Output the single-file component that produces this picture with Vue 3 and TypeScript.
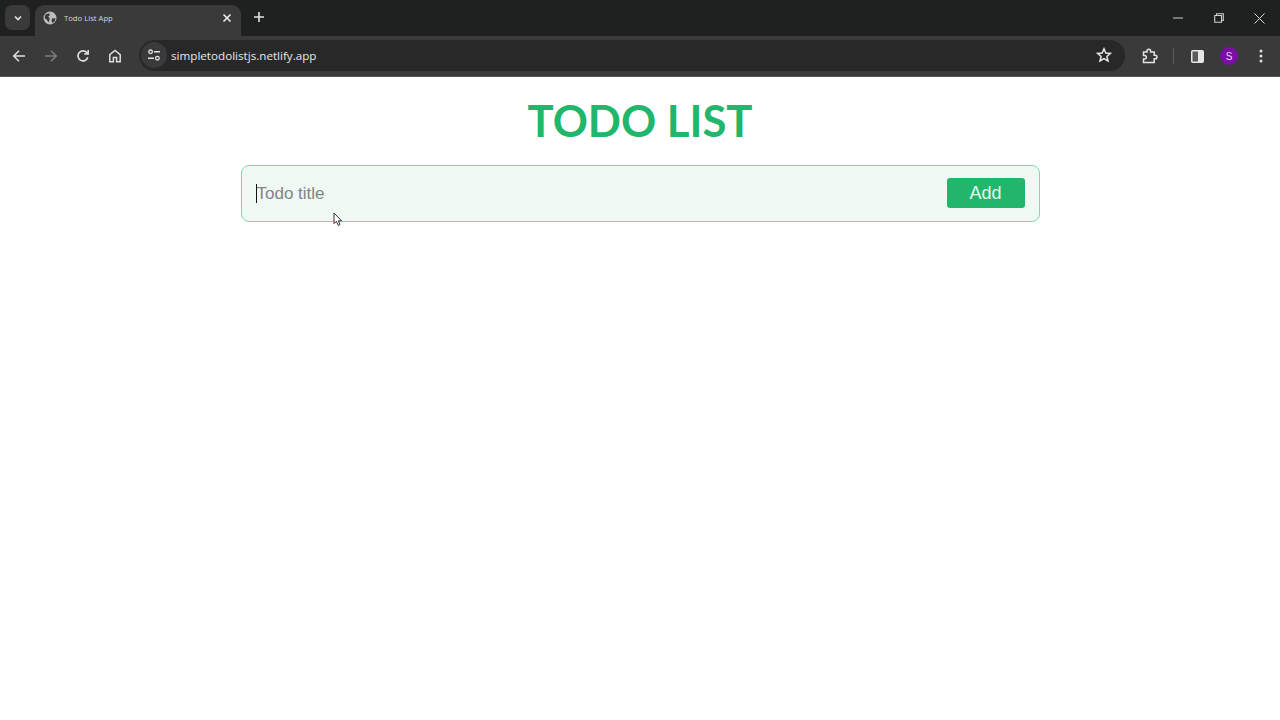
<script setup lang="ts">
import { ref } from 'vue'

const title = ref('TODO LIST')
const tabTitle = ref('Todo List App')
const url = ref('simpletodolistjs.netlify.app')
</script>

<template>
  <div class="window">
    <div class="tabstrip">
      <button class="tab-search">
        <svg width="12" height="12" viewBox="0 0 12 12"><path d="M3 4.5 6 7.5 9 4.5" fill="none" stroke="#e3e3e3" stroke-width="1.7" /></svg>
      </button>
      <div class="tab">
        <svg class="globe" width="14" height="14" viewBox="0 0 14 14">
          <circle cx="7" cy="7" r="6.5" fill="#bcbdbd" />
          <path d="M2.5 3.5 6 2.2 7 4 5.2 5.6 6.8 7.6 5.6 11.5 4 9 1.6 7ZM9 7.5 12.6 7.2 11.5 10.5 9.2 12 8.6 9.6Z" fill="#3a3a3a" />
        </svg>
        <span class="tab-title">{{ tabTitle }}</span>
        <svg class="tab-close" width="10" height="10" viewBox="0 0 10 10"><path d="M1.5 1.5 8.5 8.5M8.5 1.5 1.5 8.5" stroke="#eee" stroke-width="1.6" /></svg>
      </div>
      <svg class="new-tab" width="12" height="12" viewBox="0 0 12 12"><path d="M6 1V11M1 6H11" stroke="#e3e3e3" stroke-width="1.6" /></svg>
      <div class="window-btns">
        <svg class="minimize" width="10" height="10" viewBox="0 0 10 10"><path d="M0 5H10" stroke="#cfcfcf" stroke-width="1" /></svg>
        <svg width="10" height="10" viewBox="0 0 10 10"><path d="M2.5 2V.7H9.3V7.5H8M.7 2.5H7.5V9.3H.7Z" fill="none" stroke="#cfcfcf" stroke-width="1.1" /></svg>
        <svg width="11" height="11" viewBox="0 0 11 11"><path d="M.5.5 10.5 10.5M10.5.5 .5 10.5" stroke="#dcdcdc" stroke-width="1" /></svg>
      </div>
    </div>

    <div class="toolbar">
      <div class="nav-btns">
        <svg width="14" height="14" viewBox="0 0 14 14"><path d="M13 7H2M7 1.8 1.8 7 7 12.2" fill="none" stroke="#dedede" stroke-width="1.6" /></svg>
        <svg width="14" height="14" viewBox="0 0 14 14"><path d="M1 7H12M7 1.8 12.2 7 7 12.2" fill="none" stroke="#7c7c7c" stroke-width="1.6" /></svg>
        <svg width="14" height="14" viewBox="0 0 14 14"><path d="M11.8 8.2A5 5 0 1 1 10.6 3.4L12 4.8M12.2 1V5H8.2" fill="none" stroke="#dedede" stroke-width="1.6" /></svg>
        <svg width="14" height="14" viewBox="0 0 14 14"><path d="M1.8 12.8V5.6L7 1.4 12.2 5.6V12.8H8.6V8.4H5.4V12.8Z" fill="none" stroke="#dedede" stroke-width="1.5" /></svg>
      </div>
      <div class="omnibox">
        <span class="site-icon">
          <svg width="14" height="14" viewBox="0 0 14 14">
            <circle cx="3.6" cy="3.8" r="1.8" fill="none" stroke="#e3e3e3" stroke-width="1.3" />
            <circle cx="10.4" cy="10.2" r="1.8" fill="none" stroke="#e3e3e3" stroke-width="1.3" />
            <path d="M7 3.8H13M1 10.2H7" stroke="#e3e3e3" stroke-width="1.4" />
          </svg>
        </span>
        <span class="url">{{ url }}</span>
        <svg class="star" width="16" height="16" viewBox="0 0 16 16"><path d="M8 1.8 9.8 6 14.4 6.4 10.9 9.4 12 13.9 8 11.5 4 13.9 5.1 9.4 1.6 6.4 6.2 6Z" fill="none" stroke="#e6e6e6" stroke-width="1.5" /></svg>
      </div>
      <div class="actions">
        <svg class="puzzle" width="16" height="16" viewBox="0 0 16 16"><path d="M1.5 4H5V3A1.8 1.8 0 0 1 8.6 3V4H12.2V7.2H13.2A1.8 1.8 0 0 1 13.2 10.8H12.2V14.5H1.5V11H2.6A1.8 1.8 0 0 0 2.6 7.4H1.5Z" fill="none" stroke="#e3e3e3" stroke-width="1.5" /></svg>
        <span class="sep"></span>
        <svg class="panel" width="13" height="13" viewBox="0 0 13 13"><rect x=".75" y=".75" width="11.5" height="11.5" rx="1" fill="#5a5a5a" stroke="#e6e6e6" stroke-width="1.5" /><rect x="7" y="1" width="5" height="11" fill="#e6e6e6" /></svg>
        <span class="avatar">S</span>
        <svg class="menu" width="4" height="14" viewBox="0 0 4 14"><circle cx="2" cy="2" r="1.5" fill="#dedede" /><circle cx="2" cy="7" r="1.5" fill="#dedede" /><circle cx="2" cy="12" r="1.5" fill="#dedede" /></svg>
      </div>
    </div>

    <main class="page">
      <h1>{{ title }}</h1>
      <form class="todo-form" @submit.prevent>
        <div class="input-wrap">
          <span class="caret"></span>
          <input type="text" placeholder="Todo title" />
        </div>
        <button class="add-btn" type="submit">Add</button>
      </form>
    </main>

    <svg class="cursor" width="10" height="15" viewBox="0 0 10 15">
      <path d="M1 1V11.5L3.5 9.4 5.2 13.4 7 12.6 5.4 8.8H8.6Z" fill="#fff" stroke="#333" stroke-width="1" />
    </svg>
  </div>
</template>

<style>
html, body {
  margin: 0;
  background: #fff;
}
</style>

<style scoped>
.window {
  width: 1280px;
  height: 720px;
  overflow: hidden;
  position: relative;
  display: flex;
  flex-direction: column;
  font-family: "Liberation Sans", Arial, sans-serif;
}

.tabstrip {
  height: 36px;
  background: #1f2020;
  display: flex;
  align-items: flex-end;
  box-sizing: border-box;
  padding-left: 5px;
}

.tab-search {
  width: 25px;
  height: 25px;
  margin-bottom: 6px;
  padding: 0;
  border: none;
  border-radius: 7px;
  background: #3a3a3a;
  display: flex;
  align-items: center;
  justify-content: center;
}

.tab {
  width: 206px;
  height: 31px;
  margin-left: 5px;
  background: #3a3a3a;
  border-radius: 9px 9px 0 0;
  display: flex;
  align-items: center;
  box-sizing: border-box;
  padding: 0 9px 6px 8px;
}

.globe {
  flex: none;
}

.tab-title {
  margin-left: 7px;
  flex: 1;
  font-family: "Open Sans", sans-serif;
  font-size: 7.7px;
  color: #d6d6d6;
}

.new-tab {
  margin: 0 0 13px 12px;
}

.window-btns {
  margin-left: auto;
  height: 36px;
  display: flex;
  align-items: center;
  gap: 30px;
  padding-right: 15px;
}

.minimize {
  margin-right: 1px;
}

.toolbar {
  height: 41px;
  background: #3a3a3a;
  border-bottom: 1px solid #555;
  box-sizing: border-box;
  display: flex;
  align-items: center;
}

.nav-btns {
  display: flex;
  align-items: center;
  gap: 18px;
  padding-left: 12px;
}

.omnibox {
  width: 986px;
  height: 31px;
  margin-left: 17px;
  margin-top: -2px;
  border-radius: 16px;
  background: #282828;
  display: flex;
  align-items: center;
  box-sizing: border-box;
  padding: 0 13px 0 2px;
}

.site-icon {
  width: 26px;
  height: 26px;
  border-radius: 50%;
  background: #3a3a3a;
  display: flex;
  align-items: center;
  justify-content: center;
}

.url {
  margin-left: 4px;
  flex: 1;
  font-family: "Open Sans", sans-serif;
  font-size: 11.65px;
  color: #e8e8e8;
}

.actions {
  display: flex;
  align-items: center;
  margin-left: 17px;
}

.sep {
  width: 1px;
  height: 16px;
  margin-left: 15px;
  background: #5c5c5c;
}

.panel {
  margin-left: 17px;
}

.avatar {
  width: 18px;
  height: 18px;
  margin-left: 16px;
  border-radius: 50%;
  background: #7a0fa8;
  color: #e6d4ee;
  font-size: 10px;
  display: flex;
  align-items: center;
  justify-content: center;
}

.menu {
  margin-left: 21px;
}

.page {
  flex: 1;
  background: #fff;
  display: flex;
  flex-direction: column;
  align-items: center;
}

h1 {
  margin: 18px 0 0;
  font-family: Lato, sans-serif;
  font-size: 43.6px;
  line-height: 50px;
  font-weight: 700;
  color: #21b66b;
}

.todo-form {
  width: 799px;
  height: 57px;
  margin-top: 20px;
  box-sizing: border-box;
  border: 1px solid #7adbb0;
  border-radius: 8px;
  background: #eff8f3;
  display: flex;
  align-items: center;
  padding: 0 14px 1px;
}

.input-wrap {
  flex: 1;
  display: flex;
  align-items: center;
  position: relative;
}

.caret {
  position: absolute;
  left: 0;
  top: 2px;
  width: 1px;
  height: 19px;
  background: #111;
}

input {
  width: 100%;
  border: none;
  outline: none;
  background: transparent;
  padding: 2px 0 0 1px;
  font-family: "Liberation Sans", Arial, sans-serif;
  font-size: 17px;
}

input::placeholder {
  color: #7f8583;
  opacity: 1;
}

.add-btn {
  width: 78px;
  height: 30px;
  border: none;
  border-radius: 3px;
  background: #21b66b;
  color: #e4f6ec;
  font-family: "Liberation Sans", Arial, sans-serif;
  font-size: 18px;
  padding: 1px 0 0;
}

.cursor {
  position: absolute;
  left: 333px;
  top: 212px;
}
</style>
